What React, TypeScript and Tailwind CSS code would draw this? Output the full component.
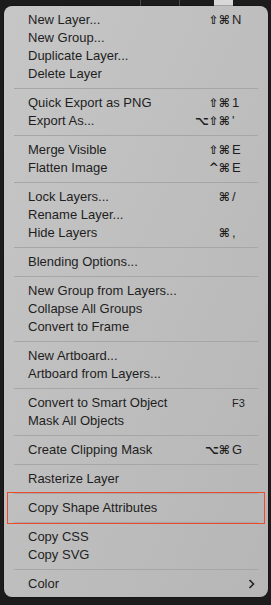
import React from "react";

type Item = {
  label: string;
  mods?: string;
  keyName?: string;
  small?: boolean;
  submenu?: boolean;
  marked?: boolean;
};

const groups: Item[][] = [
  [
    { label: "New Layer...", mods: "⇧⌘", keyName: "N" },
    { label: "New Group..." },
    { label: "Duplicate Layer..." },
    { label: "Delete Layer" },
  ],
  [
    { label: "Quick Export as PNG", mods: "⇧⌘", keyName: "1" },
    { label: "Export As...", mods: "⌥⇧⌘", keyName: "'" },
  ],
  [
    { label: "Merge Visible", mods: "⇧⌘", keyName: "E" },
    { label: "Flatten Image", mods: "^⌘", keyName: "E" },
  ],
  [
    { label: "Lock Layers...", mods: "⌘", keyName: "/" },
    { label: "Rename Layer..." },
    { label: "Hide Layers", mods: "⌘", keyName: "," },
  ],
  [{ label: "Blending Options..." }],
  [
    { label: "New Group from Layers..." },
    { label: "Collapse All Groups" },
    { label: "Convert to Frame" },
  ],
  [{ label: "New Artboard..." }, { label: "Artboard from Layers..." }],
  [
    { label: "Convert to Smart Object", keyName: "F3", small: true },
    { label: "Mask All Objects" },
  ],
  [{ label: "Create Clipping Mask", mods: "⌥⌘", keyName: "G" }],
  [{ label: "Rasterize Layer" }],
  [{ label: "Copy Shape Attributes", marked: true }],
  [{ label: "Copy CSS" }, { label: "Copy SVG" }],
  [{ label: "Color", submenu: true }],
];

function Row({ item }: { item: Item }) {
  return (
    <div className="relative flex h-[18px] items-center justify-between pl-[24px] pr-[22px]">
      <span>{item.label}</span>
      {item.submenu ? (
        <svg width="7" height="10" viewBox="0 0 7 10" className="mr-[-9px]">
          <path d="M1.5 1 L5.5 5 L1.5 9" fill="none" stroke="#222" strokeWidth="1.6" />
        </svg>
      ) : (
        (item.mods || item.keyName) && (
          <span className="flex items-center">
            <span className="pr-[2px] text-right font-['DejaVu_Sans',sans-serif] text-[12px] font-bold">{item.mods}</span>
            <span className={item.small ? "w-[14px] text-[11px]" : "w-[14px]"}>{item.keyName}</span>
          </span>
        )
      )}
      {item.marked && (
        <div className="absolute -top-[7px] -bottom-[7px] left-[3px] right-[3px] border border-[#ee4b2b]" />
      )}
    </div>
  );
}

export default function App() {
  return (
    <div className="relative h-[605px] w-[271px] overflow-hidden bg-[#1c1c1c] pl-[4px] pt-[6px] font-['Liberation_Sans',Arial,sans-serif] text-[13px] text-[#1e1e1e]">
      {/* bits of the app peeking out behind the menu */}
      <div className="absolute left-[140px] top-0 h-[7px] w-[40px] border border-t-0 border-[#4a4a4a]" />
      <div className="absolute left-[214px] top-0 h-[7px] w-[19px] bg-[#d8d8d8]" />

      <div className="relative w-[264px] rounded-[8px] bg-gradient-to-br from-[#c6c6c6] to-[#b6b6b6] pb-[4px] pt-[5px] shadow-[0_0_0_0.5px_rgba(0,0,0,0.5)]">
        {groups.map((g, gi) => (
          <div key={gi}>
            {gi > 0 && <div className="mx-[10px] my-[5px] h-px bg-[#a6a6a6]" />}
            {g.map((item) => (
              <Row key={item.label} item={item} />
            ))}
          </div>
        ))}
      </div>
    </div>
  );
}
